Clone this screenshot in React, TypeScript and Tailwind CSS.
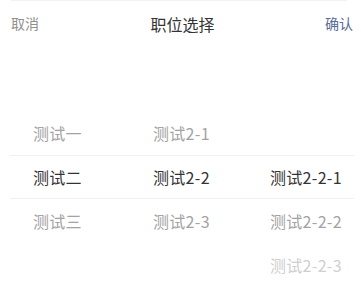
import React from "react";

interface PickerColumnProps {
    items: string[];
    selected: number;
    className?: string;
}

const ROW = 44;

const PickerColumn: React.FC<PickerColumnProps> = ({ items, selected, className }) => {
    // selected row sits at top 109px inside the picker
    const offset = 109 - selected * ROW;
    return (
        <div className={`h-full overflow-hidden ${className ?? ""}`}>
            <div className="flex flex-col" style={{ transform: `translateY(${offset}px)` }}>
                {items.map((item, i) => {
                    const dist = Math.abs(i - selected);
                    const color = dist === 0 ? "text-[#333333]" : dist === 1 ? "text-[#a3a3a3]" : "text-[#cfcfcf]";
                    return (
                        <div key={item} className={`h-[44px] flex items-center pl-[33px] text-[16px] tracking-[0.3px] ${color}`}>
                            {item}
                        </div>
                    );
                })}
            </div>
        </div>
    );
};

const App: React.FC = () => {
    return (
        <div
            className="w-[361px] h-[290px] bg-white overflow-hidden"
            style={{ fontFamily: '"Noto Sans CJK SC", "Noto Sans", sans-serif' }}
        >
            <div className="mx-[11px] w-[336px] h-px bg-[#f2f2f2]" />
            <div className="h-[45px] flex items-center justify-between px-[11px] pr-[8px]">
                <span className="text-[14px] text-[#8f8f8f]">取消</span>
                <span className="text-[16px] text-[#333333] pl-[1px]">职位选择</span>
                <span className="text-[14px] text-[#576b95]">确认</span>
            </div>
            <div className="relative h-[244px]">
                <div className="absolute left-[10px] right-[7px] top-[109px] h-[44px] border-y border-[#f0f0f0]" />
                <div className="flex h-full">
                    <PickerColumn className="w-[120px]" items={["测试一", "测试二", "测试三"]} selected={1} />
                    <PickerColumn className="w-[117px]" items={["测试2-1", "测试2-2", "测试2-3"]} selected={1} />
                    <PickerColumn className="flex-1" items={["测试2-2-1", "测试2-2-2", "测试2-2-3"]} selected={0} />
                </div>
            </div>
        </div>
    );
};

export default App;
